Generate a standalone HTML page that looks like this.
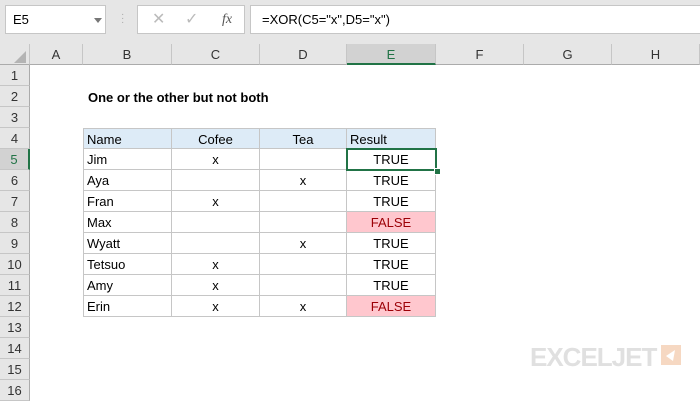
<html><head><style>
body{margin:0;width:700px;height:400px;overflow:hidden;background:#fff;font-family:"Liberation Sans",Arial,sans-serif;position:relative}
.a{position:absolute}
.top{left:0;top:0;width:700px;height:44px;background:#e6e6e6}
.box{background:#fff;border:1px solid #c6c6c6;box-sizing:border-box}
.ch{top:44px;height:21px;background:#e6e6e6;border-right:1px solid #c6c6c6;border-bottom:1px solid #ababab;box-sizing:border-box;text-align:center;font-size:13px;line-height:21px;color:#333}
.rh{left:0;width:30px;height:21px;background:#e6e6e6;border-bottom:1px solid #c6c6c6;border-right:1px solid #ababab;box-sizing:border-box;text-align:center;font-size:13px;line-height:21px;color:#333}
.c{height:21px;border-right:1px solid #c6c6c6;border-bottom:1px solid #c6c6c6;box-sizing:border-box;font-size:13px;line-height:21px;color:#000;padding:0 3px;white-space:nowrap}
.ct{text-align:center}
</style></head><body>
<div class="a top"></div>
<div class="a box" style="left:5px;top:5px;width:101px;height:29px;font-size:13px;line-height:27px;padding-left:7px">E5<span class="a" style="left:88px;top:12px;border:4px solid transparent;border-top:5px solid #777"></span></div>
<div class="a" style="left:121px;top:13px;color:#aaa;font-size:10px;line-height:4px">·<br>·<br>·</div>
<div class="a box" style="left:137px;top:5px;width:108px;height:29px;color:#bbb;font-size:16px;line-height:27px"><span class="a" style="left:14px">✕</span><span class="a" style="left:47px">✓</span><span class="a" style="left:84px;color:#555;font-family:'Liberation Serif',serif;font-style:italic;font-size:14px">fx</span></div>
<div class="a box" style="left:250px;top:5px;width:460px;height:29px;font-size:13px;line-height:27px;padding-left:11px">=XOR(C5="x",D5="x")</div>
<div class="a ch" style="left:0;width:30px"></div>
<div class="a" style="left:14px;top:51px;border-left:12px solid transparent;border-bottom:12px solid #b4b4b4"></div>
<div id="g"></div>
<div class="a" style="left:530px;top:342px;font-size:26px;font-weight:bold;color:#e0e0e0;letter-spacing:-1px">EXCELJET</div>
<svg class="a" style="left:661px;top:345px" width="20" height="20"><rect width="20" height="20" fill="#f6d8c2"/><path d="M5 11 L14 5 L12 16 Z" fill="#fff"/></svg>
<script>
var cols=[["A",30,53],["B",83,89],["C",172,88],["D",260,87],["E",347,89],["F",436,88],["G",524,88],["H",612,88]];
var h="";
cols.forEach(function(c){h+='<div class="a ch" style="left:'+c[1]+'px;width:'+c[2]+'px;'+(c[0]=="E"?'background:#d2d2d2;border-bottom:2px solid #217346;color:#217346':'')+'">'+c[0]+'</div>'});
for(var r=1;r<=16;r++){var t=65+(r-1)*21;h+='<div class="a rh" style="top:'+t+'px;'+(r==5?'background:#d2d2d2;border-right:2px solid #217346;color:#217346':'')+'">'+r+'</div>';}
h+='<div class="a" style="left:88px;top:90px;font-size:13px;font-weight:bold">One or the other but not both</div>';
var d=[["Name","Cofee","Tea","Result"],["Jim","x","","TRUE"],["Aya","","x","TRUE"],["Fran","x","","TRUE"],["Max","","","FALSE"],["Wyatt","","x","TRUE"],["Tetsuo","x","","TRUE"],["Amy","x","","TRUE"],["Erin","x","x","FALSE"]];
d.forEach(function(row,i){var t=128+i*21;
row.forEach(function(v,j){var c=cols[j+1];var bg=i==0?'#ddebf7':(v=="FALSE"?'#ffc7ce':'#fff');var col=v=="FALSE"?'#9c0006':'#000';
var al=(j==0||(i==0&&j==3))?'':'ct';
h+='<div class="a c '+al+'" style="left:'+c[1]+'px;top:'+t+'px;width:'+c[2]+'px;background:'+bg+';color:'+col+';'+(j==0?'border-left:1px solid #c6c6c6;':'')+(i==0?'border-top:1px solid #c6c6c6;':'')+'">'+v+'</div>';});});
h+='<div class="a" style="left:346px;top:148px;width:91px;height:23px;border:2px solid #217346;box-sizing:border-box"></div><div class="a" style="left:434px;top:168px;width:5px;height:5px;background:#217346;border:1px solid #fff"></div>';
document.getElementById("g").innerHTML=h;
</script>
</body></html>
